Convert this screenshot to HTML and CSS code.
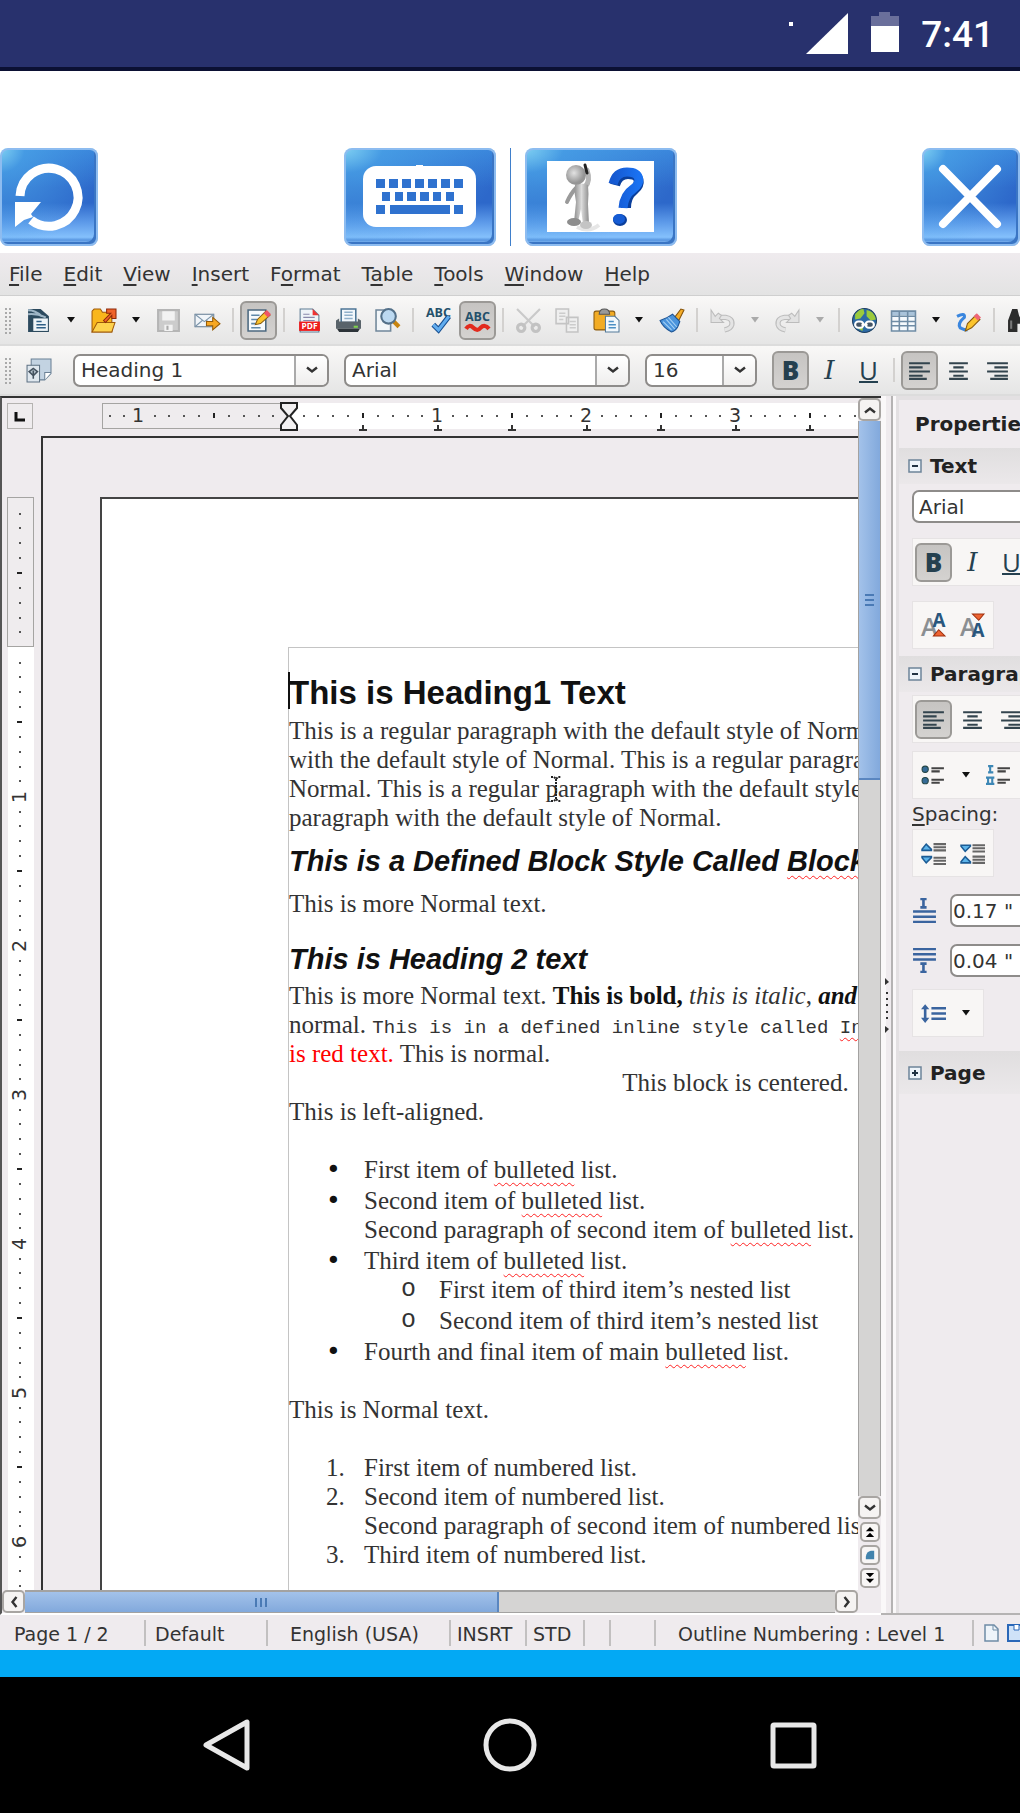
FILE: index.html
```html
<!DOCTYPE html>
<html lang="en">
<head>
  <meta charset="UTF-8">
  <title>Writer</title>
  <meta name="viewport" content="width=device-width, initial-scale=1.0">
  <link rel="stylesheet" href="styles.css">
</head>
<body>

  <!-- Shared icons -->
  <svg class="sprite" aria-hidden="true">
    <defs>
      <symbol id="left" viewBox="0 0 24 24"><path d="M2 5h20M2 9h13M2 13h20M2 17h13M2 20h17" stroke="#33444e" stroke-width="2"/></symbol>
      <symbol id="center" viewBox="0 0 24 24"><path d="M3 5h18M7 9h10M3 13h18M7 17h10M3 20h18" stroke="#33444e" stroke-width="2"/></symbol>
      <symbol id="right" viewBox="0 0 24 24"><path d="M2 5h20M9 9h13M2 13h20M9 17h13M5 20h17" stroke="#33444e" stroke-width="2"/></symbol>
      <symbol id="drop" viewBox="0 0 10 6"><path d="M1 0h8L5 5.500z" fill="currentColor"/></symbol>
      <symbol id="chev" viewBox="0 0 12 8"><path d="M1 1.500l5 4 5-4" fill="none" stroke="#333" stroke-width="2.400"/></symbol>
      <g id="inch" fill="#555">
        <path d="M15 0h2v2h-2zM29 0h2v2h-2zM44 0h2v2h-2zM59 0h2v2h-2zM89 0h2v2h-2zM104 0h2v2h-2zM119 0h2v2h-2zM133 0h2v2h-2z"/>
        <path d="M74-2h2v5h-2z" fill="#222"/>
      </g>
      <g id="inchv" fill="#555">
        <path d="M0 15v2h2v-2zM0 29v2h2v-2zM0 44v2h2v-2zM0 59v2h2v-2zM0 89v2h2v-2zM0 104v2h2v-2zM0 119v2h2v-2zM0 133v2h2v-2z"/>
        <path d="M-2 74v2h5v-2z" fill="#222"/>
      </g>
      <path id="tab" d="M-4 5h8M0 0v5" stroke="#333" stroke-width="2"/>
    </defs>
  </svg>

  <div class="status-bar">
    <svg width="112" height="46" viewBox="0 0 112 46">
      <path d="M0 11h4v4H0z" fill="#fff"/>
      <path d="M17 43L59 2v41z" fill="#fff"/>
      <path d="M82 5h8V1h11v4h9v10H82z" fill="#6a6f9b"/>
      <path d="M82 15h28v26H82z" fill="#fff"/>
    </svg>
    <span class="clock">7:41</span>
  </div>

  <header class="remote-bar">
    <button class="glossy" aria-label="Refresh">
      <svg width="98" height="98" viewBox="0 0 98 98">
        <path d="M20 48a29 29 0 1 1 11 24" fill="none" stroke="#fff" stroke-width="9"/>
        <path d="M15 54h26L31 66l2 3-9 3-9 7z" fill="#fff"/>
      </svg>
    </button>
    <div class="remote-mid">
      <button class="glossy wide" aria-label="Keyboard">
        <svg width="152" height="98" viewBox="0 0 152 98">
          <rect x="19" y="18" width="113" height="61" rx="13" fill="#fff"/>
          <path d="M72 17h7v2h-7z" fill="#fff"/>
          <path d="M32 31h9v9h-9zM45 31h9v9h-9zM58 31h9v9h-9zM71 31h9v9h-9zM84 31h9v9h-9zM97 31h9v9h-9zM110 31h9v9h-9zM38 44h8v9h-8zM51 44h8v9h-8zM63 44h9v9h-9zM76 44h9v9h-9zM89 44h8v9h-8zM102 44h8v9h-8zM32 57h9v9h-9zM46 57h60v9H46zM110 57h9v9h-9z" fill="#2f72cf"/>
        </svg>
      </button>
      <span class="remote-split"></span>
      <button class="glossy wide" aria-label="Help">
        <svg width="152" height="98" viewBox="0 0 152 98">
          <defs>
            <radialGradient id="man" cx=".4" cy=".4"><stop offset="0" stop-color="#e2e2e2"/><stop offset="1" stop-color="#959595"/></radialGradient>
            <linearGradient id="body"><stop offset="0" stop-color="#8d8d8d"/><stop offset=".5" stop-color="#dcdcdc"/><stop offset="1" stop-color="#8d8d8d"/></linearGradient>
            <linearGradient id="ask" x1="0" x2="1"><stop offset="0" stop-color="#1558d0"/><stop offset="1" stop-color="#1a72f2"/></linearGradient>
          </defs>
          <path d="M22 13h107v71H22z" fill="#fff"/>
          <path d="M52 79q12 6 22-2" fill="none" stroke="#e6e6e6" stroke-width="4"/>
          <path d="M52 39q-6 6-10 15" fill="none" stroke="#9a9a9a" stroke-width="4" stroke-linecap="round"/>
          <path d="M60 39q6-6 2-17" fill="none" stroke="#b5b5b5" stroke-width="5" stroke-linecap="round"/>
          <path d="M50 37q6-3 13 0 1 9 0 19l1 20h-6l-2-15-3 13h-4l2-20q-2-8-1-17z" fill="url(#body)"/>
          <circle cx="51" cy="27" r="10" fill="url(#man)"/>
          <path d="M60 17l2 8" stroke="#222" stroke-width="3" stroke-linecap="round"/>
          <ellipse cx="49" cy="74" rx="7" ry="4" fill="#8d8d8d"/>
          <ellipse cx="61" cy="77" rx="6" ry="4" fill="#c4c4c4"/>
          <path d="M90 37q3-11 13-11c13 0 13 10 6 16q-8 6-8 18" fill="none" stroke="#0a3f9c" stroke-width="10"/>
          <path d="M88 36q3-12 14-12c14 0 15 11 6 17q-9 6-10 19" fill="none" stroke="url(#ask)" stroke-width="9"/>
          <ellipse cx="95" cy="72" rx="7" ry="6" fill="#0a3f9c"/>
          <ellipse cx="94" cy="71" rx="6" ry="5" fill="#155cd4"/>
        </svg>
      </button>
    </div>
    <button class="glossy" aria-label="Close">
      <svg width="98" height="98" viewBox="0 0 98 98"><path d="M21 21l54 55M75 21L21 76" stroke="#fff" stroke-width="8" stroke-linecap="round"/></svg>
    </button>
  </header>

  <nav class="menu">
    <button><u>F</u>ile</button>
    <button><u>E</u>dit</button>
    <button><u>V</u>iew</button>
    <button><u>I</u>nsert</button>
    <button>F<u>o</u>rmat</button>
    <button>T<u>a</u>ble</button>
    <button><u>T</u>ools</button>
    <button><u>W</u>indow</button>
    <button><u>H</u>elp</button>
  </nav>

  <div class="toolbar">
    <span class="grip"></span>
    <button class="tool" aria-label="New"><svg viewBox="0 0 24 24"><path d="M2 1h12l8 7v15H2z" fill="#2c4a5e"/><path d="M2 2q7 0 13 6M2 6q8-1 17 3" stroke="#9fb6c6" stroke-width="2" fill="none"/><path d="M7 10h14v12H7z" fill="#eef4f8"/><path d="M10 13h5M10 16h9M10 19h9" stroke="#2f5f86" stroke-width="1.500"/></svg></button>
    <button class="more" aria-label="New options"><svg><use href="#drop"/></svg></button>
    <button class="tool" aria-label="Open"><svg viewBox="0 0 24 24"><path d="M1 23V3l2-2h6l2 3h9v19z" fill="#f9b61c" stroke="#a05a0a"/><path d="M1 23l5-9h17l-3 9z" fill="#fdd24d" stroke="#a05a0a"/><path d="M12 12l7-7h-4V1h9v9h-4V7l-6 7z" fill="#f0642a" stroke="#8e2a0a"/></svg></button>
    <button class="more" aria-label="Open options"><svg><use href="#drop"/></svg></button>
    <button class="tool" aria-label="Save"><svg viewBox="0 0 24 24"><path d="M2 2h20v20H2z" fill="#ccc" stroke="#b5b5b5" stroke-width="2"/><path d="M6 3h12v9H6zM8 16h8v6H8z" fill="#f2f2f2"/><path d="M10 17h2v4h-2z" fill="#aaa"/></svg></button>
    <button class="tool" aria-label="E-mail"><svg viewBox="0 0 24 24"><path d="M0 6h18v12H0z" fill="#f1f5f9" stroke="#627b92"/><path d="M0 6l9 7 9-7M0 18l7-6M18 18l-7-6" fill="none" stroke="#7c95aa"/><path d="M11 13h6V9l7 6-7 6v-4h-6z" fill="#f7a823" stroke="#955b08"/></svg></button>
    <span class="sep"></span>
    <button class="tool on" aria-label="Edit file"><svg viewBox="0 0 24 24"><path d="M2 2h17v20H2z" fill="#f7fafc" stroke="#4d6a80" stroke-width="1.500"/><path d="M5 7h8M5 11h6M5 15h5M5 19h9" stroke="#5f87a8" stroke-width="1.500"/><path d="M9 16l2-5 8-8 4 4-9 8z" fill="#fbc42c" stroke="#87590d"/><path d="M17 5l3-3 4 4-3 3z" fill="#ee5566"/></svg></button>
    <span class="sep"></span>
    <button class="tool" aria-label="Export PDF"><svg viewBox="0 0 24 24"><path d="M3 1h12l6 6v16H3z" fill="#eef4f8" stroke="#5e7c93"/><path d="M15 1l6 6h-6z" fill="#e33"/><path d="M6 6h6M6 9h11M6 12h11" stroke="#88a" /><path d="M2 13h20v9H2z" fill="#ee1d1d"/><text x="12" y="20" text-anchor="middle" font-size="8">PDF</text></svg></button>
    <button class="tool" aria-label="Print"><svg viewBox="0 0 24 24"><path d="M5 1h14v13H5z" fill="#f2f7fb" stroke="#4d7696" stroke-width="1.500"/><path d="M8 4h8M8 7h8M8 10h8" stroke="#8fb0ca" stroke-width="1.500"/><path d="M0 12l3-2v3h18v-3l3 2v8H0z" fill="#59636a"/><path d="M1 20h22l-2 3H3z" fill="#2d3439"/><path d="M17 17h4v2h-4z" fill="#7fd34d"/></svg></button>
    <button class="tool" aria-label="Print preview"><svg viewBox="0 0 24 24"><path d="M1 2h14v20H1z" fill="#f2f6f9" stroke="#70879a" stroke-width="1.500"/><path d="M17 12l6 6" stroke="#c78410" stroke-width="4"/><circle cx="13" cy="8" r="7" fill="#bcd9f1" stroke="#537089" stroke-width="2"/></svg></button>
    <span class="sep"></span>
    <button class="tool" aria-label="Spelling"><svg viewBox="0 0 24 24"><text class="abc" x="12" y="9" text-anchor="middle" font-size="12">ABC</text><path d="M7 16l5 5L22 8" fill="none" stroke="#174f91" stroke-width="5"/><path d="M7 16l5 5L22 8" fill="none" stroke="#62adef" stroke-width="3"/></svg></button>
    <button class="tool on" aria-label="AutoSpellcheck"><svg viewBox="0 0 24 24"><text class="abc" x="12" y="12" text-anchor="middle" font-size="12">ABC</text><path d="M1 20q3-5 7-1 4 4 7 0 4-4 8 1" fill="none" stroke="#e22a1d" stroke-width="4"/></svg></button>
    <span class="sep"></span>
    <button class="tool" aria-label="Cut"><svg viewBox="0 0 24 24"><path d="M1 1l17 17M23 1L6 18" stroke="#c9c9c9" stroke-width="2"/><circle cx="5" cy="19" r="3.500" fill="none" stroke="#c2c2c2" stroke-width="3"/><circle cx="19" cy="19" r="3.500" fill="none" stroke="#c2c2c2" stroke-width="3"/></svg></button>
    <button class="tool" aria-label="Copy"><svg viewBox="0 0 24 24"><path d="M1 1h12v14H1zM11 9h11v14H11z" fill="#efefef" stroke="#c4c4c4" stroke-width="1.500"/><path d="M4 5h6M4 8h6M4 11h4M14 13h6M14 16h6M14 19h6" stroke="#ccc" stroke-width="1.500"/></svg></button>
    <button class="tool" aria-label="Paste"><svg viewBox="0 0 24 24"><rect x="0" y="3" width="20" height="18" rx="2" fill="#f2ac25" stroke="#8b5a0d"/><path d="M5 6q0-5 5-5t5 5z" fill="#999" stroke="#555"/><path d="M11 8h9l4 4v11H11z" fill="#f2f8fc" stroke="#547a9a"/><path d="M14 13h5M14 16h7M14 19h7" stroke="#4b8fc4" stroke-width="1.500"/></svg></button>
    <button class="more" aria-label="Paste options"><svg><use href="#drop"/></svg></button>
    <button class="tool" aria-label="Clone formatting"><svg viewBox="0 0 24 24"><path d="M15 9l6-8 3 1-5 10z" fill="#f4ac27" stroke="#855209"/><path d="M8 9l5-3 7 7-2 5q-2 4-6 5Q4 19 1 12z" fill="#4b94dc" stroke="#1d5494"/><path d="M4 13l8 8M7 11l8 9M9 9l8 9" stroke="#a7d2f5"/></svg></button>
    <span class="sep"></span>
    <button class="tool" aria-label="Undo"><svg viewBox="0 0 24 24"><path d="M7 9h8q7 1 6 7-1 4-7 5" fill="none" stroke="#bcbcbc" stroke-width="5"/><path d="M7 9h8q7 1 6 7-1 4-7 5" fill="none" stroke="#e4e4e4" stroke-width="3"/><path d="M1 2v12h12l-4-4 2-3-3-2-3 3z" fill="#e2e2e2" stroke="#bcbcbc"/></svg></button>
    <button class="more off" aria-label="Undo options"><svg><use href="#drop"/></svg></button>
    <button class="tool" aria-label="Redo"><svg viewBox="0 0 24 24"><path d="M17 9H9q-7 1-6 7 1 4 7 5" fill="none" stroke="#bcbcbc" stroke-width="5"/><path d="M17 9H9q-7 1-6 7 1 4 7 5" fill="none" stroke="#e4e4e4" stroke-width="3"/><path d="M23 2v12H11l4-4-2-3 3-2 3 3z" fill="#e2e2e2" stroke="#bcbcbc"/></svg></button>
    <button class="more off" aria-label="Redo options"><svg><use href="#drop"/></svg></button>
    <span class="sep"></span>
    <button class="tool" aria-label="Hyperlink"><svg viewBox="0 0 24 24"><circle cx="12" cy="12" r="11.500" fill="#2d6aa5" stroke="#1d3f60"/><path d="M3 6q4-5 8-5l1 4-4 5-5 1zM14 2q7 1 9 9l-5 1-4-4zM4 16l7 1-1 5q-5-2-6-6z" fill="#9bca3c"/><rect x="3" y="13" width="8" height="6" rx="3" fill="#456" stroke="#fff" stroke-width="2"/><rect x="13" y="13" width="8" height="6" rx="3" fill="#456" stroke="#fff" stroke-width="2"/><path d="M9 16h6" stroke="#fff" stroke-width="2"/></svg></button>
    <button class="tool" aria-label="Table"><svg viewBox="0 0 24 24"><path d="M0 3h24v19H0z" fill="#f6fafd"/><path d="M0 3h24v4H0z" fill="#a9c3da"/><path d="M.5 3h23v19H.5zM0 8h24M0 13h24M0 17h24M8 3v19M16 3v19" fill="none" stroke="#6f8ca5" stroke-width="1.500"/></svg></button>
    <button class="more" aria-label="Table options"><svg><use href="#drop"/></svg></button>
    <button class="tool" aria-label="Draw functions"><svg viewBox="0 0 24 24"><path d="M1 8q8-4 7 1-7 6-4 10 4 2 7 2" fill="none" stroke="#3a86de" stroke-width="3"/><path d="M9 22l2-7 8-8 4 4-8 8z" fill="#fbc42c" stroke="#87590d"/><path d="M17 8l3-3 4 4-3 3z" fill="#ee6577"/></svg></button>
    <span class="sep"></span>
    <button class="tool" aria-label="Find"><svg viewBox="0 0 24 24"><path d="M1 23V12l4-11h5l2 8 2-8h5l4 11v11h-9v-8h-4v8z" fill="#2c2c2c"/><path d="M4 12v8" stroke="#777" stroke-width="2"/></svg></button>
  </div>

  <div class="toolbar">
    <span class="grip"></span>
    <button class="tool" aria-label="Styles"><svg viewBox="0 0 24 24"><path d="M5 1h19v14l-6 6H5z" fill="#c3d3e2" stroke="#6b8196"/><path d="M24 14h-6v7" fill="#fff" stroke="#6b8196"/><path d="M1 7h12v16H1z" fill="#dfe7ee" stroke="#5d7183"/><path d="M3 13l4-3 4 3-4 4zM7 12v8" fill="#b5c2cd" stroke="#44525f" stroke-width="1.500"/></svg></button>
    <div class="combo style-box">
      <select aria-label="Paragraph style"><option>Heading 1</option></select>
      <span class="arrow"><svg><use href="#chev"/></svg></span>
    </div>
    <div class="combo font-box">
      <select aria-label="Font name"><option>Arial</option></select>
      <span class="arrow"><svg><use href="#chev"/></svg></span>
    </div>
    <div class="combo size-box">
      <select aria-label="Font size"><option>16</option></select>
      <span class="arrow"><svg><use href="#chev"/></svg></span>
    </div>
    <button class="tool on bold">B</button>
    <button class="tool ital">I</button>
    <button class="tool under">U</button>
    <span class="sep"></span>
    <button class="tool on" aria-label="Align left"><svg><use href="#left"/></svg></button>
    <button class="tool" aria-label="Align center"><svg><use href="#center"/></svg></button>
    <button class="tool" aria-label="Align right"><svg><use href="#right"/></svg></button>
  </div>

  <div class="workspace">
    <div class="editor">
      <svg class="ruler-top">
        <rect x="5.500" y="5.500" width="25" height="25" fill="#efecee" stroke="#b5b3b1"/>
        <path d="M14 14v8h9" fill="none" stroke="#111" stroke-width="3"/>
        <rect x="286" y="5" width="100%" height="26" fill="#fff"/>
        <rect x="100.500" y="5.500" width="186" height="25" fill="#efecee" stroke="#a5a4a2"/>
        <path d="M107 17h2v2h-2zM121 17h2v2h-2z" fill="#555"/>
        <text x="136" y="24">1</text>
        <use href="#inch" x="137" y="17"/>
        <use href="#inch" x="286" y="17"/>
        <text x="435" y="24">1</text>
        <use href="#inch" x="435" y="17"/>
        <text x="584" y="24">2</text>
        <use href="#inch" x="584" y="17"/>
        <text x="733" y="24">3</text>
        <use href="#inch" x="733" y="17"/>
        <use href="#tab" x="361" y="27"/><use href="#tab" x="436" y="27"/><use href="#tab" x="510" y="27"/><use href="#tab" x="585" y="27"/><use href="#tab" x="659" y="27"/><use href="#tab" x="734" y="27"/><use href="#tab" x="808" y="27"/>
        <path d="M279 5h16v5l-7 8 7 9v5h-16v-5l7-9-7-8z" fill="#f3f1f2" stroke="#222" stroke-width="2"/>
      </svg>

      <svg class="ruler-left">
        <rect x="6" y="210" width="26" height="100%" fill="#fff"/>
        <rect x="5.500" y="61.500" width="26" height="149" fill="#efecee" stroke="#a5a4a2"/>
        <use href="#inchv" x="17" y="62"/>
        <use href="#inchv" x="17" y="211"/>
        <use href="#inchv" x="17" y="360"/>
        <use href="#inchv" x="17" y="509"/>
        <use href="#inchv" x="17" y="658"/>
        <use href="#inchv" x="17" y="807"/>
        <use href="#inchv" x="17" y="956"/>
        <use href="#inchv" x="17" y="1105"/>
        <text transform="translate(24 361) rotate(-90)">1</text>
        <text transform="translate(24 510) rotate(-90)">2</text>
        <text transform="translate(24 659) rotate(-90)">3</text>
        <text transform="translate(24 808) rotate(-90)">4</text>
        <text transform="translate(24 957) rotate(-90)">5</text>
        <text transform="translate(24 1106) rotate(-90)">6</text>
      </svg>

      <main class="doc">
        <div class="sheet">
          <article class="body-text">
            <span class="caret"></span>
            <h1>This is Heading1 Text</h1>
            <p>This is a regular paragraph with the default style of Normal.<br>
              with the default style of Normal. This is a regular paragraph<br>
              Normal. This is a regular paragraph with the default style<br>
              paragraph with the default style of Normal.</p>
            <h2 class="block-style">This is a Defined Block Style Called <span class="typo">BlockStyle</span></h2>
            <p>This is more Normal text.</p>
            <h2>This is Heading 2 text</h2>
            <p>This is more Normal text. <b>This is bold,</b> <i>this is italic</i>, <b><i>and</i></b><br>
              normal. <code>This is in a defined inline style called <span class="typo">Inline</span></code><br>
              <span class="red">is red text.</span> This is normal.</p>
            <p class="centered">This block is centered.</p>
            <p>This is left-aligned.</p>
            <ul>
              <li><span class="mark dot">•</span>First item of <span class="typo">bulleted</span> list.</li>
              <li><span class="mark dot">•</span>Second item of <span class="typo">bulleted</span> list.
                <p>Second paragraph of second item of <span class="typo">bulleted</span> list.</p></li>
              <li><span class="mark dot">•</span>Third item of <span class="typo">bulleted</span> list.
                <ul>
                  <li><span class="mark ring">o</span>First item of third item’s nested list</li>
                  <li><span class="mark ring">o</span>Second item of third item’s nested list</li>
                </ul></li>
              <li><span class="mark dot">•</span>Fourth and final item of main <span class="typo">bulleted</span> list.</li>
            </ul>
            <p class="after-list">This is Normal text.</p>
            <ol>
              <li><span class="mark">1.</span>First item of numbered list.</li>
              <li><span class="mark">2.</span>Second item of numbered list.
                <p>Second paragraph of second item of numbered list.</p></li>
              <li><span class="mark">3.</span>Third item of numbered list.</li>
            </ol>
            <svg class="ibeam" viewBox="0 0 12 26"><path d="M1 1h3l2 2 2-2h3M6 3v20M1 25h3l2-2 2 2h3" fill="none" stroke="#222" stroke-width="2" stroke-dasharray="2 1"/></svg>
          </article>
        </div>
      </main>

      <div class="vscroll">
        <button class="step" aria-label="Scroll up"><svg class="up"><use href="#chev"/></svg></button>
        <div class="track"><span class="thumb"></span></div>
        <button class="step" aria-label="Scroll down"><svg><use href="#chev"/></svg></button>
        <button class="jump" aria-label="Previous page"><svg viewBox="0 0 12 14"><path d="M1 6l5-5 5 5zM1 13l5-5 5 5z"/></svg></button>
        <button class="jump" aria-label="Navigation"><svg viewBox="0 0 12 14"><path d="M1 12V9q1-6 6-7h4v10z" fill="#4284ad"/></svg></button>
        <button class="jump" aria-label="Next page"><svg viewBox="0 0 12 14"><path d="M1 1l5 5 5-5zM1 8l5 5 5-5z"/></svg></button>
      </div>

      <div class="hscroll">
        <button class="step" aria-label="Scroll left"><svg class="back"><use href="#chev"/></svg></button>
        <div class="track"><span class="thumb"></span></div>
        <button class="step" aria-label="Scroll right"><svg class="next"><use href="#chev"/></svg></button>
      </div>
    </div>

    <div class="splitter">
      <svg width="8" height="56" viewBox="0 0 8 56" fill="#333"><path d="M2 1l4 4-4 3zM2 49l4 3-4 4zM3 15h2v2H3zM3 21h2v2H3zM3 27h2v2H3zM3 34h2v2H3zM3 40h2v2H3z"/></svg>
    </div>

    <aside class="sidebar">
      <div class="side-title">Properties</div>

      <button class="side-head"><svg viewBox="0 0 14 14"><path d="M1 1h12v12H1z" fill="#eef4fa" stroke="#6d8499" stroke-width="1.500"/><path d="M4 7h6" stroke="#234" stroke-width="2"/></svg>Text</button>
      <div class="side-body">
        <input class="side-font" type="text" value="Arial" aria-label="Font">
        <div class="group">
          <button class="tool on bold">B</button>
          <button class="tool ital">I</button>
          <button class="tool under">U</button>
        </div>
        <div class="group short">
          <button class="tool" aria-label="Grow font"><svg viewBox="0 0 24 24"><text x="0" y="22" class="aa grey" font-size="24">A</text><text x="11" y="13" class="aa" font-size="18">A</text><path d="M12 22l5-6 6 6z" fill="#ee6432" stroke="#a02e0c"/></svg></button>
          <button class="tool" aria-label="Shrink font"><svg viewBox="0 0 24 24"><text x="0" y="22" class="aa grey" font-size="24">A</text><text x="11" y="23" class="aa" font-size="18">A</text><path d="M12 1h11l-5 6z" fill="#ee6432" stroke="#a02e0c"/></svg></button>
        </div>
      </div>

      <button class="side-head"><svg viewBox="0 0 14 14"><path d="M1 1h12v12H1z" fill="#eef4fa" stroke="#6d8499" stroke-width="1.500"/><path d="M4 7h6" stroke="#234" stroke-width="2"/></svg>Paragraph</button>
      <div class="side-body para">
        <div class="group">
          <button class="tool on" aria-label="Align left"><svg><use href="#left"/></svg></button>
          <button class="tool" aria-label="Align center"><svg><use href="#center"/></svg></button>
          <button class="tool" aria-label="Align right"><svg><use href="#right"/></svg></button>
        </div>
        <div class="group">
          <button class="tool" aria-label="Bullets"><svg viewBox="0 0 24 24"><circle cx="4" cy="6" r="3" fill="#356b96" stroke="#244"/><circle cx="4" cy="17" r="3" fill="#356b96" stroke="#244"/><path d="M10 5h12M10 8h8M10 16h12M10 19h8" stroke="#444" stroke-width="2"/></svg></button>
          <button class="more" aria-label="Bullet options"><svg><use href="#drop"/></svg></button>
          <button class="tool" aria-label="Numbering"><svg viewBox="0 0 24 24"><path d="M2 3h5M2 9h5M4 3v6M0 14h8M0 20h8M2 14v6M6 14v6" stroke="#3d87b5" stroke-width="2"/><path d="M11 5h12M11 8h8M11 16h12M11 19h8" stroke="#444" stroke-width="2"/></svg></button>
        </div>
        <div class="side-label"><u>S</u>pacing:</div>
        <div class="group short">
          <button class="tool" aria-label="Increase spacing"><svg viewBox="0 0 24 24"><path d="M1 8l4-5 5 5v1H1zM1 15h9v1l-5 5-4-5z" fill="#5db4ea" stroke="#1c5c95" stroke-width="1.500"/><path d="M12 3h12M12 6h12M12 9h12M12 16h12M12 19h12M12 22h12" stroke="#666" stroke-width="2"/></svg></button>
          <button class="tool" aria-label="Decrease spacing"><svg viewBox="0 0 24 24"><path d="M1 4h9v1l-5 5-4-5zM1 20l4-5 5 5v1H1z" fill="#5db4ea" stroke="#1c5c95" stroke-width="1.500"/><path d="M12 4h12M12 7h12M12 10h12M12 15h12M12 18h12M12 21h12" stroke="#666" stroke-width="2"/></svg></button>
        </div>
        <label class="spin">
          <svg viewBox="0 0 24 24"><path d="M8 1h6M8 9h6M11 1v8M1 13h22M1 18h22M1 23h22" stroke="#3a649f" stroke-width="2.500"/></svg>
          <input type="text" value='0.17 "' aria-label="Above paragraph spacing">
        </label>
        <label class="spin">
          <svg viewBox="0 0 24 24"><path d="M1 1h22M1 6h22M1 11h22M8 15h6M8 23h6M11 15v8" stroke="#3a649f" stroke-width="2.500"/></svg>
          <input type="text" value='0.04 "' aria-label="Below paragraph spacing">
        </label>
        <div class="group line">
          <button class="tool" aria-label="Line spacing"><svg viewBox="0 0 24 24"><path d="M4 6v13M10 7h14M10 12h14M10 17h14" stroke="#3a649f" stroke-width="2.500"/><path d="M0 8l4-5 4 5zM0 16l4 5 4-5z" fill="#3a649f"/></svg></button>
          <button class="more" aria-label="Line spacing options"><svg><use href="#drop"/></svg></button>
        </div>
      </div>

      <button class="side-head page-head"><svg viewBox="0 0 14 14"><path d="M1 1h12v12H1z" fill="#eef4fa" stroke="#6d8499" stroke-width="1.500"/><path d="M4 7h6M7 4v6" stroke="#234" stroke-width="2"/></svg>Page</button>
    </aside>
  </div>

  <div class="doc-status">
    <span class="c-page">Page 1 / 2</span>
    <span class="c-style">Default</span>
    <span class="c-lang">English (USA)</span>
    <span class="c-ins">INSRT</span>
    <span class="c-sel">STD</span>
    <span class="c-mod"></span>
    <span class="c-sig"></span>
    <span class="c-outline">Outline Numbering : Level 1</span>
    <span class="c-view">
      <svg width="15" height="18" viewBox="0 0 15 18"><path d="M1 1h9l4 4v12H1z" fill="#eef4fa" stroke="#6f8ca6" stroke-width="1.500"/><path d="M9 1v5h5" fill="none" stroke="#6f8ca6"/></svg>
      <svg width="24" height="18" viewBox="0 0 24 18"><path d="M1 1h22v16H1z" fill="#cfe2f8" stroke="#2a67b8" stroke-width="2"/><path d="M7 1v5h5V1" fill="#fff" stroke="#2a67b8"/></svg>
    </span>
  </div>

  <div class="accent"></div>

  <footer class="nav-bar">
    <button aria-label="Back"><svg viewBox="0 0 54 54"><path d="M6 27L47 4v46z" stroke-linejoin="round"/></svg></button>
    <button aria-label="Home"><svg viewBox="0 0 54 54"><circle cx="27" cy="27" r="24"/></svg></button>
    <button aria-label="Recent apps"><svg viewBox="0 0 54 54"><rect x="7" y="7" width="41" height="41" rx="1"/></svg></button>
  </footer>

</body>
</html>
```

FILE: styles.css
```css
* {
  box-sizing: border-box;
}

body {
  margin: 0;
  min-height: 100vh;
  display: flex;
  flex-direction: column;
  overflow-x: hidden;
  background: #fff;
  color: #333;
  font-family: "DejaVu Sans", sans-serif;
  font-size: 20px;
}

button, select, input {
  font: inherit;
  color: inherit;
  border: none;
  background: none;
  margin: 0;
  padding: 0;
  border-radius: 0;
}

button {
  cursor: pointer;
}

svg {
  display: block;
  flex: none;
}

u {
  text-underline-offset: 3px;
}

.sprite {
  position: absolute;
  width: 0;
  height: 0;
}

/* phone status bar */
.status-bar {
  flex: none;
  height: 71px;
  display: flex;
  justify-content: flex-end;
  align-items: flex-start;
  gap: 20px;
  padding: 11px 26px 0 0;
  background: #28316d;
  border-bottom: 4px solid #0b1033;
}

.clock {
  font-family: Roboto, sans-serif;
  font-size: 37px;
  font-weight: 500;
  line-height: 48px;
  color: #fff;
}

/* remote control buttons */
.remote-bar {
  flex: none;
  display: flex;
  justify-content: space-between;
  padding: 77px 0 7px;
}

.remote-mid {
  display: flex;
  gap: 14px;
}

.remote-split {
  width: 1px;
  background: #3f7fcb;
}

.glossy {
  width: 98px;
  height: 98px;
  border-radius: 8px;
  overflow: hidden;
  background:
    radial-gradient(ellipse at 0 0, #7fd0f2 0, rgba(75, 165, 232, 0.7) 18%, rgba(75, 165, 232, 0) 75%),
    linear-gradient(#3a86dc 0, #2d68ca 40%, #2d68ca 56%, #5b98e8 75%, #84c0fc 91%, #5795e0 94%, #8dbdf3 97%, #2c62ae 100%);
  box-shadow: inset 0 0 0 2px #8dbcf0, inset -4px -4px 0 #3a75c4;
}

.glossy.wide {
  width: 152px;
}

/* menu */
.menu {
  flex: none;
  height: 43px;
  display: flex;
  gap: 21px;
  padding: 0 9px;
  background: linear-gradient(#efebee, #e3e3e3);
  border-bottom: 1px solid #cfcfcf;
}

.menu button {
  line-height: 42px;
}

/* toolbars */
.toolbar {
  flex: none;
  height: 50px;
  display: flex;
  align-items: center;
  overflow: hidden;
  background: linear-gradient(#f9f8f7, #e5e5e5);
  border-bottom: 2px solid #dcdcdc;
}

.grip {
  flex: none;
  width: 8px;
  height: 27px;
  margin: 0 7px 0 4px;
  background: radial-gradient(circle, #aaa 1px, transparent 1px) 0 0 / 4px 4px;
}

.tool {
  flex: none;
  width: 37px;
  height: 39px;
  margin: 0 1px;
  display: flex;
  align-items: center;
  justify-content: center;
  border: 2px solid transparent;
  border-radius: 6px;
}

.tool.on {
  background: linear-gradient(#c6c4c2, #d4d2d0);
  border-color: #9b9996;
}

.tool svg {
  width: 25px;
  height: 25px;
  overflow: visible;
}

.tool text {
  font-family: "Open Sans", sans-serif;
  font-weight: bold;
  fill: #fff;
}

.tool .abc {
  fill: #24506b;
}

.tool .aa {
  fill: #28567d;
}

.tool .grey {
  font-weight: 600;
  fill: #8b8f92;
}

.bold, .ital, .under {
  color: #25404f;
  font-family: "Open Sans", sans-serif;
  font-size: 26px;
  line-height: 30px;
}

.bold {
  font-weight: 800;
}

.ital {
  font-family: "DejaVu Serif", serif;
  font-style: italic;
}

.under {
  text-decoration: underline;
  text-decoration-thickness: 2px;
}

.more {
  flex: none;
  width: 26px;
  height: 39px;
  display: flex;
  align-items: center;
  justify-content: center;
  color: #111;
}

.more svg {
  width: 10px;
  height: 6px;
}

.more.off {
  color: #aaa;
}

.sep {
  flex: none;
  width: 2px;
  height: 24px;
  margin: 0 5px;
  background: #d3d1cf;
}

.combo {
  flex: none;
  height: 33px;
  display: flex;
  margin-left: 15px;
  background: #fff;
  border: 2px solid #8e8c8a;
  border-radius: 7px;
  overflow: hidden;
}

.combo select {
  flex: 1;
  min-width: 0;
  padding-left: 6px;
  appearance: none;
}

.arrow {
  width: 33px;
  display: flex;
  align-items: center;
  justify-content: center;
  border-left: 2px solid #aaa;
  background: linear-gradient(#fff, #efeeed);
}

.arrow svg, .step svg {
  width: 12px;
  height: 8px;
}

.style-box {
  width: 256px;
}

.font-box {
  width: 286px;
}

.size-box {
  width: 112px;
  margin-right: 14px;
}

/* editor */
.workspace {
  flex: 1;
  display: flex;
  min-width: 0;
  background: #efebee;
}

.editor {
  flex: 1;
  min-width: 0;
  display: grid;
  grid-template-columns: 39px minmax(0, 1fr) 23px;
  grid-template-rows: 38px 1fr 23px;
  border-top: 2px solid #333;
  border-left: 2px solid #555;
  border-bottom: 2px solid #fff;
}

.ruler-top {
  grid-column: 1 / 3;
  width: 100%;
  height: 38px;
}

.ruler-left {
  grid-row: 2;
  width: 39px;
  height: 100%;
}

.ruler-top text, .ruler-left text {
  font-size: 19px;
  text-anchor: middle;
  fill: #333;
}

.doc {
  display: flex;
  min-width: 0;
  overflow: hidden;
  padding: 59px 0 0 57px;
  border-top: 2px solid #333;
  border-left: 2px solid #333;
}

.sheet {
  flex: none;
  display: flex;
  padding: 148px 187px 0 186px;
  background: #fff;
  border-top: 2px solid #444;
  border-left: 2px solid #444;
}

.body-text {
  position: relative;
  width: 894px;
  padding: 26px 0 20px;
  border-top: 1px solid #c4c4c4;
  border-left: 1px solid #c4c4c4;
  font-family: "Liberation Serif", serif;
  font-size: 25px;
  line-height: 29px;
  white-space: nowrap;
}

.body-text h1, .body-text h2 {
  color: #111;
  font-family: "Liberation Sans", sans-serif;
}

.body-text h1 {
  margin: 0 0 4px;
  font-size: 33px;
  line-height: 38px;
}

.body-text h2 {
  margin: 24px 0 5px;
  font-size: 29px;
  font-style: italic;
  line-height: 34px;
}

.body-text .block-style {
  margin: 12px 0 11px;
}

.body-text p {
  margin: 0;
}

.body-text .centered {
  text-align: center;
}

.body-text code {
  font-family: "Liberation Mono", monospace;
  font-size: 19px;
  line-height: 1;
}

.body-text b {
  color: #111;
}

.body-text ul, .body-text ol {
  margin: 29px 0 0;
  padding-left: 75px;
  list-style: none;
}

.body-text ul ul {
  margin: 0;
}

.body-text ul > li + li {
  margin-top: 2px;
}

.body-text .after-list {
  margin-top: 29px;
}

.mark {
  float: left;
  width: 38px;
  margin-left: -38px;
}

.dot {
  font-family: "DejaVu Sans", sans-serif;
  color: #111;
}

.ring {
  font-family: "Liberation Mono", monospace;
}

.red {
  color: #f00;
}

.typo {
  text-decoration: underline wavy #f22 1px;
  text-decoration-skip-ink: none;
  text-underline-offset: 4px;
}

.caret {
  position: absolute;
  left: -1px;
  top: 24px;
  width: 2px;
  height: 37px;
  background: #111;
}

.ibeam {
  position: absolute;
  left: 261px;
  top: 128px;
  width: 12px;
  height: 26px;
}

/* scrollbars */
.vscroll {
  grid-column: 3;
  grid-row: 1 / 3;
  display: flex;
  flex-direction: column;
  align-items: center;
  padding-bottom: 2px;
}

.hscroll {
  grid-column: 1 / 3;
  display: flex;
  align-items: center;
}

.step {
  flex: none;
  width: 23px;
  height: 23px;
  display: flex;
  align-items: center;
  justify-content: center;
  background: #f5f3f2;
  border: 2px solid #a8a5a2;
  border-radius: 5px;
}

.up {
  transform: rotate(180deg);
}

.back {
  transform: rotate(90deg);
}

.next {
  transform: rotate(-90deg);
}

.track {
  flex: 1;
  display: flex;
  background: #d5d4d3;
}

.thumb {
  display: block;
}

.vscroll .track {
  width: 23px;
  flex-direction: column;
  border: solid #a3a2a1;
  border-width: 0 1px;
}

.vscroll .thumb {
  height: 33.4%;
  background:
    repeating-linear-gradient(#4a7ab5 0 2px, transparent 2px 5px) center / 9px 12px no-repeat,
    linear-gradient(90deg, #a3c2ea, #82a9dc);
  border-bottom: 2px solid #5a86c0;
}

.hscroll .track {
  height: 23px;
  border: solid #a3a2a1;
  border-width: 2px 0 1px;
}

.hscroll .thumb {
  width: 58.5%;
  background:
    repeating-linear-gradient(90deg, #4a7ab5 0 2px, transparent 2px 5px) center / 12px 9px no-repeat,
    linear-gradient(#a3c2ea, #82a9dc);
  border-right: 2px solid #5a86c0;
}

.jump {
  flex: none;
  width: 20px;
  height: 20px;
  margin-top: 3px;
  display: flex;
  align-items: center;
  justify-content: center;
  background: #f8f6f5;
  border: 2px solid #a8a5a2;
  border-radius: 5px;
}

.jump svg {
  width: 10px;
  height: 12px;
}

/* sidebar */
.splitter {
  flex: none;
  width: 18px;
  display: flex;
  align-items: center;
  padding: 0 0 0 2px;
  background: linear-gradient(90deg, #faf8f9 0 5px, #efebee 5px 10px, #b5b3b3 10px 12px, #faf8f9 12px 15px, #e3e0e2 15px);
  border-bottom: 2px solid #b5b3b3;
}

.sidebar {
  flex: none;
  width: 121px;
  overflow: hidden;
  white-space: nowrap;
  border-top: 4px solid #e3e0e2;
  border-bottom: 2px solid #b5b3b3;
}

.side-title {
  padding-left: 16px;
  font-weight: bold;
  line-height: 48px;
  color: #222;
}

.side-head {
  width: 100%;
  height: 36px;
  display: flex;
  align-items: center;
  gap: 8px;
  padding-left: 9px;
  background: linear-gradient(#e0dedf, #ebe8ea);
  color: #222;
  font-weight: bold;
}

.side-head svg {
  width: 14px;
  height: 14px;
}

.side-body {
  display: flex;
  flex-direction: column;
  align-items: flex-start;
  padding: 6px 0 7px 13px;
}

.side-font, .spin input {
  height: 33px;
  background: #fff;
  border: 2px solid #8e8c8a;
  border-radius: 7px;
}

.side-font {
  width: 140px;
  padding-left: 5px;
}

.group {
  width: 140px;
  height: 48px;
  flex: none;
  display: flex;
  align-items: center;
  padding-left: 1px;
  background: #f8f6f5;
  border: 1px solid #e6e3e4;
}

.group.short {
  width: 82px;
}

.group.line {
  width: 72px;
}

.side-body > * + .group {
  margin-top: 15px;
}

.side-body.para {
  padding: 3px 0 14px 13px;
}

.side-body.para > .group + .group {
  margin-top: 8px;
}

.side-label {
  line-height: 30px;
}

.side-body.para > .side-label + .group {
  margin-top: 0;
}

.side-body.para > .line {
  margin-top: 12px;
}

.spin {
  display: flex;
  align-items: center;
  gap: 13px;
  margin-top: 17px;
}

.spin svg {
  width: 25px;
  height: 25px;
}

.spin input {
  width: 100px;
  padding-left: 1px;
}

.page-head {
  height: 43px;
}

/* document status line */
.doc-status {
  flex: none;
  height: 35px;
  display: flex;
  align-items: center;
  overflow: hidden;
  background: #efebee;
  font-size: 19px;
  line-height: 28px;
  white-space: nowrap;
}

.doc-status > span {
  flex: none;
  height: 26px;
  padding-left: 9px;
  border-right: 2px solid #c2c0c0;
}

.doc-status .c-page {
  width: 146px;
  padding-left: 14px;
}

.c-style {
  width: 122px;
}

.doc-status .c-lang {
  width: 183px;
  padding-left: 22px;
}

.doc-status .c-ins {
  width: 76px;
  padding-left: 6px;
}

.doc-status .c-sel {
  width: 58px;
  padding-left: 6px;
}

.c-mod {
  width: 26px;
}

.c-sig {
  width: 45px;
}

.doc-status .c-outline {
  width: 318px;
  padding-left: 22px;
}

.doc-status .c-view {
  display: flex;
  align-items: center;
  gap: 8px;
  padding-left: 10px;
}

.accent {
  flex: none;
  height: 27px;
  background: #03a9f4;
}

/* phone navigation */
.nav-bar {
  flex: none;
  height: 136px;
  display: flex;
  align-items: center;
  justify-content: space-around;
  padding: 0 85px;
  background: #000;
}

.nav-bar svg {
  width: 54px;
  height: 54px;
  fill: none;
  stroke: #e8e8e8;
  stroke-width: 5;
}
```
